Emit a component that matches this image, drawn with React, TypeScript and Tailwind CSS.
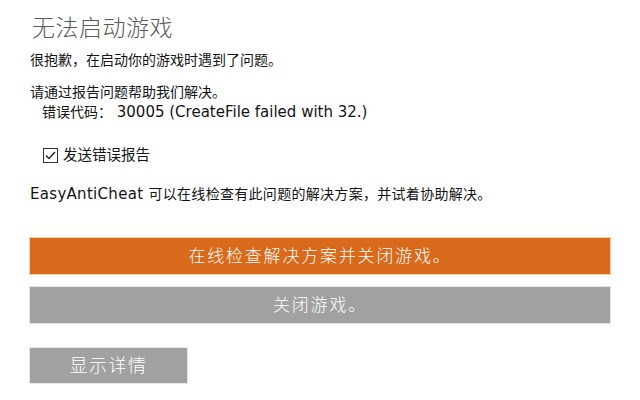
import React from "react";

const cjk = { fontFamily: '"DejaVu Sans", "Noto Sans CJK SC", sans-serif' };

function Latin({ children }: { children: React.ReactNode }) {
  return <span className="text-[15px]">{children}</span>;
}

export default function App() {
  return (
    <div
      className="w-[640px] h-[400px] bg-white flex flex-col px-[30px] pt-[14px] text-[14px] leading-[19px] text-[#141414]"
      style={cjk}
    >
      <div className="text-[23px] leading-[28px] text-[#5a5a5a] font-light tracking-[0.5px] pl-[2px]">无法启动游戏</div>
      <div className="mt-[9px]">很抱歉，在启动你的游戏时遇到了问题。</div>
      <div className="mt-[13px]">请通过报告问题帮助我们解决。</div>
      <div className="mt-[1px] pl-[12px] whitespace-nowrap">
        错误代码：<Latin> 30005 (CreateFile failed with 32.)</Latin>
      </div>
      <div className="mt-[24px] pl-[13px] flex items-center gap-[5px]">
        <svg width="15" height="15" viewBox="0 0 15 15" className="shrink-0">
          <rect x="0.5" y="0.5" width="14" height="14" fill="#fff" stroke="#333" />
          <path d="M3 7.5 L6 10.5 L12 4" fill="none" stroke="#222" strokeWidth="1.4" />
        </svg>
        <span className="text-[14.5px]">发送错误报告</span>
      </div>
      <div className="mt-[20px] whitespace-nowrap tracking-[0.3px]">
        <Latin>EasyAntiCheat </Latin>可以在线检查有此问题的解决方案，并试着协助解决。
      </div>
      <button
        className="mt-[34px] h-[36px] w-full bg-[#d9691b] ring-1 ring-[#f3d2b4] text-white text-[17px] font-light tracking-[1.8px] flex items-center justify-center"
        style={cjk}
      >
        在线检查解决方案并关闭游戏。
      </button>
      <button
        className="mt-[13px] h-[36px] w-full bg-[#a1a1a1] ring-1 ring-[#e4e4e4] text-white text-[17px] font-light tracking-[1.8px] flex items-center justify-center"
        style={cjk}
      >
        关闭游戏。
      </button>
      <button
        className="mt-[25px] h-[35px] w-[157px] bg-[#a1a1a1] ring-1 ring-[#e8e8e8] text-white text-[18px] font-light tracking-[1.5px] flex items-center justify-center"
        style={cjk}
      >
        显示详情
      </button>
    </div>
  );
}
